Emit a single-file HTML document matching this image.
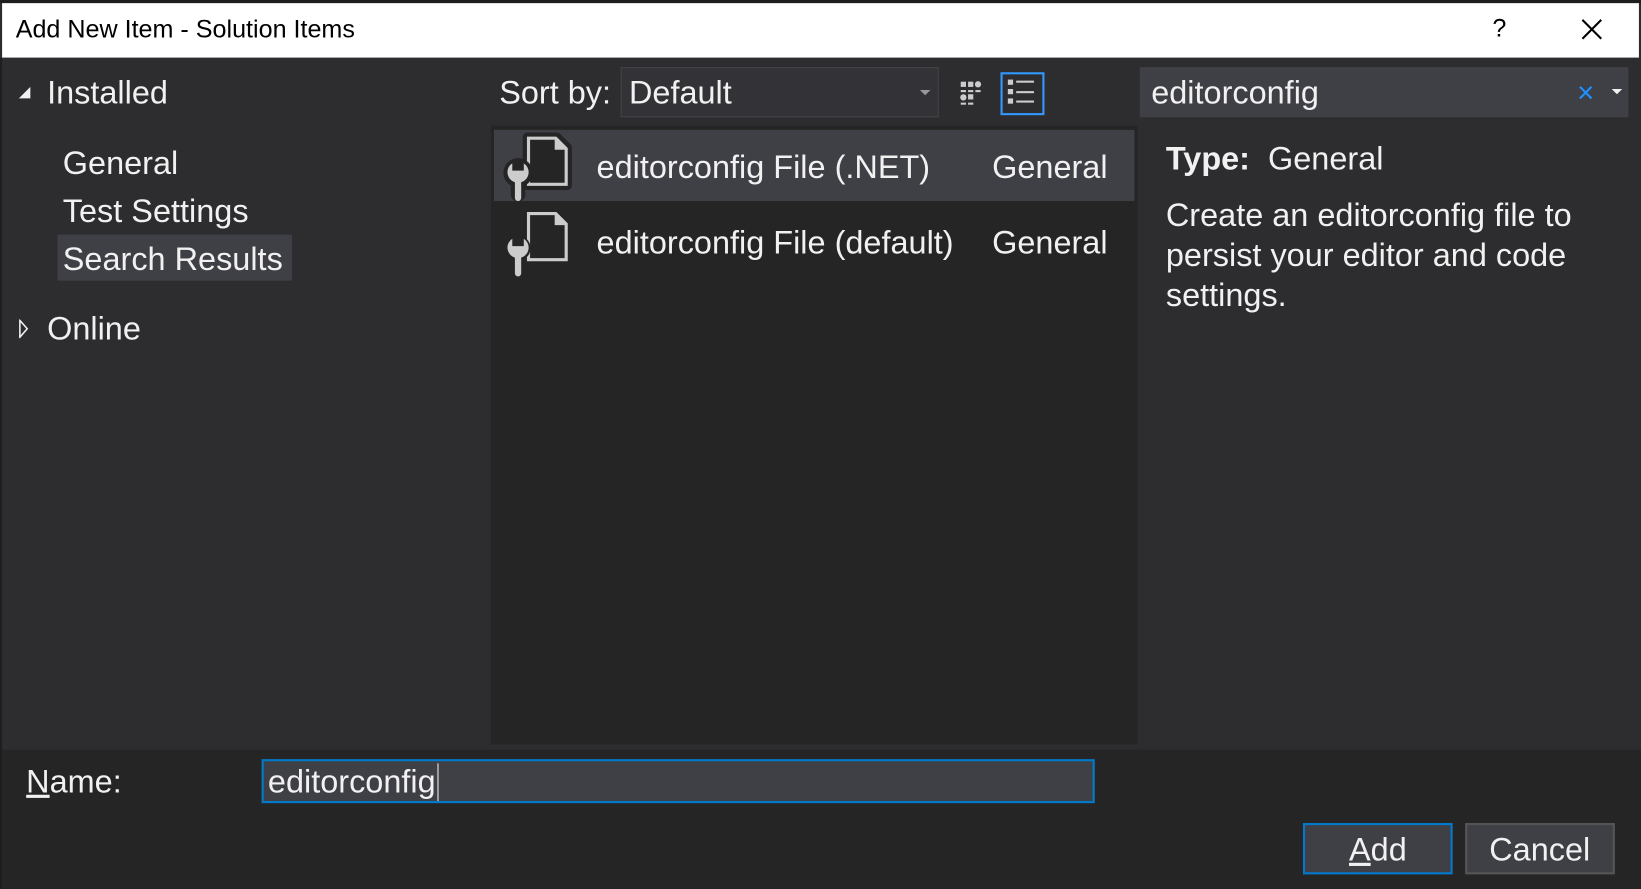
<!DOCTYPE html>
<html><head><meta charset="utf-8"><style>
html,body{margin:0;padding:0;background:#2d2d30;width:1641px;height:889px;overflow:hidden}
#w{position:absolute;left:0;top:0;width:1568px;height:849px;transform:scale(1.04656,1.04711);transform-origin:0 0;font-family:"Liberation Sans",sans-serif;color:#f1f1f1;background:#2d2d30}
.a{position:absolute;white-space:nowrap}
.t30{font-size:31px;line-height:30px}
</style></head><body><div id="w">
<div class="a" style="left:0;top:0;width:1568px;height:3px;background:#1e1e1e"></div>
<div class="a" style="left:2px;top:3px;width:1564px;height:52px;background:#fff"></div>
<div class="a" style="left:15px;top:15px;font-size:24px;color:#000">Add New Item - Solution Items</div>
<div class="a" style="left:1426px;top:14px;font-size:24px;color:#000">?</div>
<svg class="a" style="left:1510px;top:17px" width="22" height="22"><path d="M2 2L20 20M20 2L2 20" stroke="#000" stroke-width="2"/></svg>
<div class="a" style="left:0;top:55px;width:2px;height:794px;background:#1e1e1e"></div>
<!-- left -->
<svg class="a" style="left:17px;top:82px" width="14" height="14"><path d="M12 1L12 12L1 12Z" fill="#f1f1f1"/></svg>
<div class="a t30" style="left:45px;top:74px">Installed</div>
<div class="a t30" style="left:60px;top:141px">General</div>
<div class="a t30" style="left:60px;top:187px">Test Settings</div>
<div class="a" style="left:55px;top:224px;width:224px;height:44px;background:#3f3f46"></div>
<div class="a t30" style="left:60px;top:233px">Search Results</div>
<svg class="a" style="left:17px;top:305px" width="12" height="18"><path d="M2 1L9 9L2 17Z" fill="none" stroke="#f1f1f1" stroke-width="1.5"/></svg>
<div class="a t30" style="left:45px;top:299px">Online</div>
<!-- toolbar -->
<div class="a t30" style="left:477px;top:74px">Sort by:</div>
<div class="a" style="left:593px;top:64px;width:302px;height:46px;background:#333337;border:1px solid #434346"></div>
<div class="a t30" style="left:601px;top:74px">Default</div>
<svg class="a" style="left:879px;top:86px" width="12" height="8"><path d="M0 0H10L5 5Z" fill="#999"/></svg>
<svg class="a" style="left:913px;top:74px" width="30" height="30" fill="#ccc"><rect x="5" y="4" width="5" height="5"/><rect x="12" y="4" width="5" height="5"/><circle cx="21.5" cy="6.5" r="3"/><rect x="5" y="12" width="5" height="2"/><rect x="12" y="12" width="5" height="2"/><rect x="19" y="12" width="5" height="2"/><circle cx="7.5" cy="19" r="3"/><rect x="12" y="16" width="5" height="5"/><rect x="5" y="24" width="5" height="2"/><rect x="12" y="24" width="5" height="2"/></svg>
<div class="a" style="left:956px;top:69px;width:38px;height:37px;border:2px solid #3399ff"></div>
<svg class="a" style="left:958px;top:71px" width="38" height="37" fill="#ccc"><rect x="5" y="5" width="5" height="5"/><rect x="13" y="6" width="17" height="2"/><rect x="5" y="14" width="5" height="5"/><rect x="13" y="16" width="17" height="2"/><rect x="5" y="23" width="5" height="5"/><rect x="13" y="25" width="17" height="2"/></svg>
<div class="a" style="left:1089px;top:64px;width:467px;height:48px;background:#3f3f46"></div>
<div class="a t30" style="left:1100px;top:74px">editorconfig</div>
<div class="a" style="left:1507px;top:73px;font-size:28px;color:#1e90ff">×</div>
<svg class="a" style="left:1540px;top:85px" width="12" height="8"><path d="M0 0H10L5 5Z" fill="#f1f1f1"/></svg>
<!-- list -->
<div class="a" style="left:469px;top:120px;width:618px;height:591px;background:#252526"></div>
<div class="a" style="left:472px;top:124px;width:612px;height:68px;background:#3f3f46"></div>
<svg class="a" style="left:480px;top:126px" width="70" height="68"><path d="M24 5H52L62 15V51H24Z" fill="#252526" stroke="#252526" stroke-width="9" stroke-linejoin="round"/><path d="M25 6H51L61 16V50H25Z" fill="#252526" stroke="#ccc" stroke-width="3"/><path d="M50 6V17H61Z" fill="#ccc"/><circle cx="15" cy="39" r="14" fill="#252526"/><rect x="8" y="40" width="14" height="26" rx="6" fill="#252526"/><path d="M9.5 30A10 10 0 0 0 12 48V63A3 3 0 0 0 18 63V48A10 10 0 0 0 20.5 30V37H9.5Z" fill="#ccc"/></svg>
<div class="a t30" style="left:570px;top:145px">editorconfig File (.NET)</div>
<div class="a t30" style="left:948px;top:145px">General</div>
<svg class="a" style="left:480px;top:198px" width="70" height="68"><path d="M25 6H51L61 16V50H25Z" fill="#252526" stroke="#ccc" stroke-width="3"/><path d="M50 6V17H61Z" fill="#ccc"/><circle cx="15" cy="39" r="12" fill="#252526"/><path d="M9.5 30A10 10 0 0 0 12 48V63A3 3 0 0 0 18 63V48A10 10 0 0 0 20.5 30V37H9.5Z" fill="#ccc"/></svg>
<div class="a t30" style="left:570px;top:217px">editorconfig File (default)</div>
<div class="a t30" style="left:948px;top:217px">General</div>
<!-- details -->
<div class="a t30" style="left:1114px;top:137px"><b>Type:</b>&nbsp; General</div>
<div class="a" style="left:1114px;top:187px;font-size:31px;line-height:38px;white-space:normal;width:445px">Create an editorconfig file to persist your editor and code settings.</div>
<!-- bottom -->
<div class="a" style="left:2px;top:716px;width:1566px;height:133px;background:#252526"></div>
<div class="a t30" style="left:25px;top:732px"><u>N</u>ame:</div>
<div class="a" style="left:250px;top:725px;width:792px;height:38px;background:#3f3f46;border:2px solid #007acc"></div>
<div class="a t30" style="left:256px;top:732px">editorconfig</div>
<div class="a" style="left:418px;top:729px;width:1px;height:36px;background:#f1f1f1"></div>
<div class="a" style="left:1245px;top:786px;width:139px;height:45px;background:#3f3f46;border:2px solid #007acc"></div>
<div class="a t30" style="left:1289px;top:797px"><u>A</u>dd</div>
<div class="a" style="left:1400px;top:786px;width:139px;height:45px;background:#3f3f46;border:2px solid #555"></div>
<div class="a t30" style="left:1423px;top:797px">Cancel</div>
</div></body></html>
